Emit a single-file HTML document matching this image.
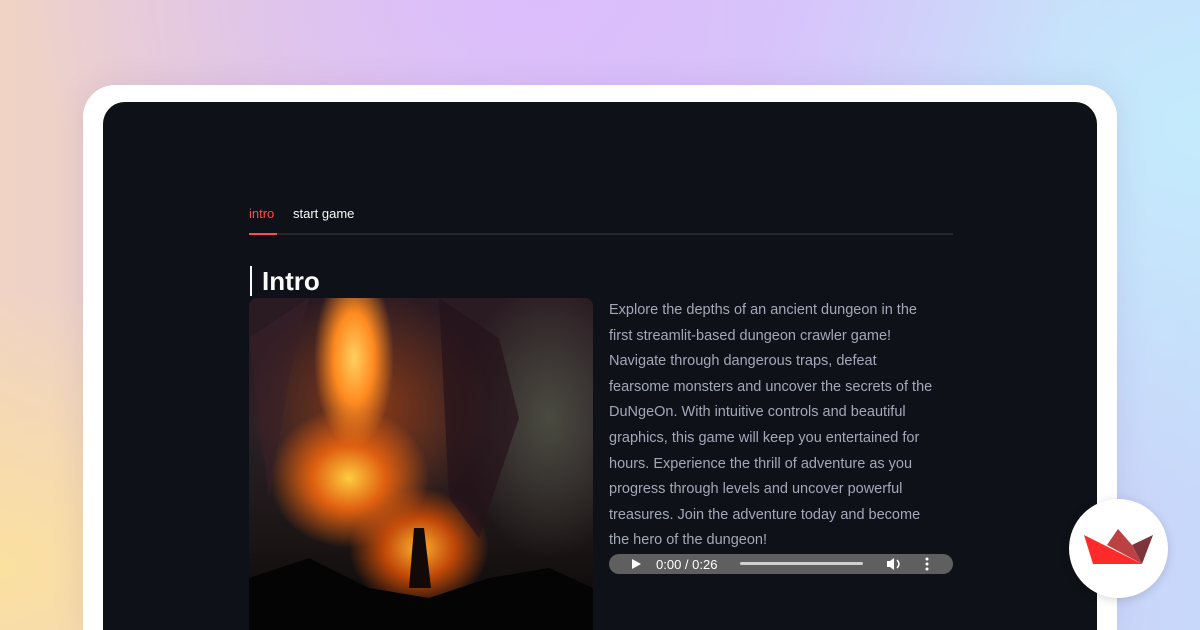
<!DOCTYPE html>
<html style="width:1200px;height:630px;overflow:hidden"><head><style>
body{margin:0;width:1200px;height:630px;overflow:hidden;font-family:"Liberation Sans",sans-serif;
background:radial-gradient(ellipse 600px 400px at 0% 90%,#fbe0a0,rgba(251,224,160,0) 70%),
radial-gradient(ellipse 700px 400px at 45% 0%,#dbbdfc,rgba(219,189,252,0) 75%),
radial-gradient(ellipse 600px 500px at 100% 20%,#c4ebfc,rgba(196,235,252,0) 75%),
linear-gradient(90deg,#f0d3c4,#d8c4f6 50%,#c8d8fa);position:relative}
.frame{position:absolute;left:83px;top:85px;width:1034px;height:545px;background:#fff;border-radius:32px 32px 0 0;box-shadow:0 0 30px rgba(120,100,160,.15)}
.panel{position:absolute;left:103px;top:102px;width:994px;height:528px;background:#0e1117;border-radius:22px 22px 0 0;overflow:hidden}
.tabs{position:absolute;left:249px;top:206px;font-size:13px;color:#fafafa}
.tab1{position:absolute;left:0;color:#ff4b4b}
.tab2{position:absolute;left:44px;white-space:nowrap}
.line{position:absolute;left:249px;top:233px;width:704px;height:2px;background:#262730}
.act{position:absolute;left:249px;top:233px;width:28px;height:2px;background:#ff4b4b}
h1{position:absolute;left:250px;top:266px;margin:0;font-size:26px;font-weight:700;color:#fafafa;padding-left:10px;border-left:2px solid #fafafa;line-height:30px}
.img{position:absolute;left:249px;top:298px;width:344px;height:332px;border-radius:8px 8px 0 0;overflow:hidden;
background:radial-gradient(ellipse 40px 90px at 105px 60px,#ffd060,#ff8a20 50%,rgba(255,100,20,0) 100%),
radial-gradient(ellipse 80px 70px at 100px 180px,#ffcc40,#e06010 45%,rgba(120,40,10,0) 100%),
radial-gradient(ellipse 70px 60px at 170px 250px,#ffb030,#c04808 50%,rgba(80,30,10,0) 100%),
radial-gradient(ellipse 120px 120px at 120px 110px,#8a3a18,rgba(60,20,15,0) 100%),
radial-gradient(ellipse 90px 140px at 300px 120px,#4a4a40,rgba(40,40,40,0) 100%),
linear-gradient(180deg,#2a1a22,#2a2026 40%,#1a1414 75%,#080608)}
.txt{position:absolute;left:609px;top:298px;width:360px;font-size:14.5px;line-height:25.6px;color:#a3a8b8;white-space:nowrap}
.audio{position:absolute;left:609px;top:554px;width:344px;height:20px;border-radius:10px;background:#5f5f5f;color:#fff;font-size:14px}
.logo{position:absolute;left:1069px;top:499px;width:99px;height:99px;border-radius:50%;background:#fff;box-shadow:0 2px 10px rgba(0,0,0,.15)}
</style></head><body>
<div class="frame"></div>
<div class="panel"></div>
<div class="tabs"><span class="tab1">intro</span><span class="tab2">start game</span></div>
<div class="line"></div><div class="act"></div>
<h1>Intro</h1>
<div class="img"><svg width="344" height="332" style="position:absolute;left:0;top:0">
<path d="M0 40 L60 0 L40 80 L20 200 Z" fill="#3a2028" opacity=".6"/>
<path d="M190 0 L250 40 L270 120 L230 240 L200 200 Z" fill="#25121a" opacity=".7"/>
<path d="M0 280 L60 260 L120 290 L180 300 L240 280 L300 270 L344 290 L344 332 L0 332 Z" fill="#050404"/>
<path d="M165 230 L175 230 L182 290 L160 290 Z" fill="#120a08"/>
</svg></div>
<div class="txt">Explore the depths of an ancient dungeon in the<br>first streamlit-based dungeon crawler game!<br>Navigate through dangerous traps, defeat<br>fearsome monsters and uncover the secrets of the<br>DuNgeOn. With intuitive controls and beautiful<br>graphics, this game will keep you entertained for<br>hours. Experience the thrill of adventure as you<br>progress through levels and uncover powerful<br>treasures. Join the adventure today and become<br>the hero of the dungeon!</div>
<div class="audio">
<svg width="344" height="20" style="position:absolute;left:0;top:0">
<path d="M23 5 L32 10 L23 15 Z" fill="#fff"/>
<text x="47" y="15" font-family="Liberation Sans,sans-serif" font-size="13" fill="#fff">0:00 / 0:26</text>
<rect x="131" y="8" width="123" height="3" rx="1.5" fill="#d0d0d0"/>
<path d="M278 7 h3 l4 -3 v12 l-4 -3 h-3 Z" fill="#fff"/>
<path d="M288 6 q4 4 0 8" stroke="#fff" stroke-width="1.5" fill="none"/>
<circle cx="318" cy="5" r="1.5" fill="#fff"/><circle cx="318" cy="10" r="1.5" fill="#fff"/><circle cx="318" cy="15" r="1.5" fill="#fff"/>
</svg></div>
<div class="logo"><svg width="99" height="99" style="position:absolute;left:0;top:0">
<path d="M63 46 L84 36 L73 65 Z" fill="#7d353b"/>
<path d="M38 46 L49 30 L63 46 L73 65 Z" fill="#bd4043"/>
<path d="M15 36 L73 65 L24 65 Z" fill="#ff2b2b"/>
</svg></div>
</body></html>
